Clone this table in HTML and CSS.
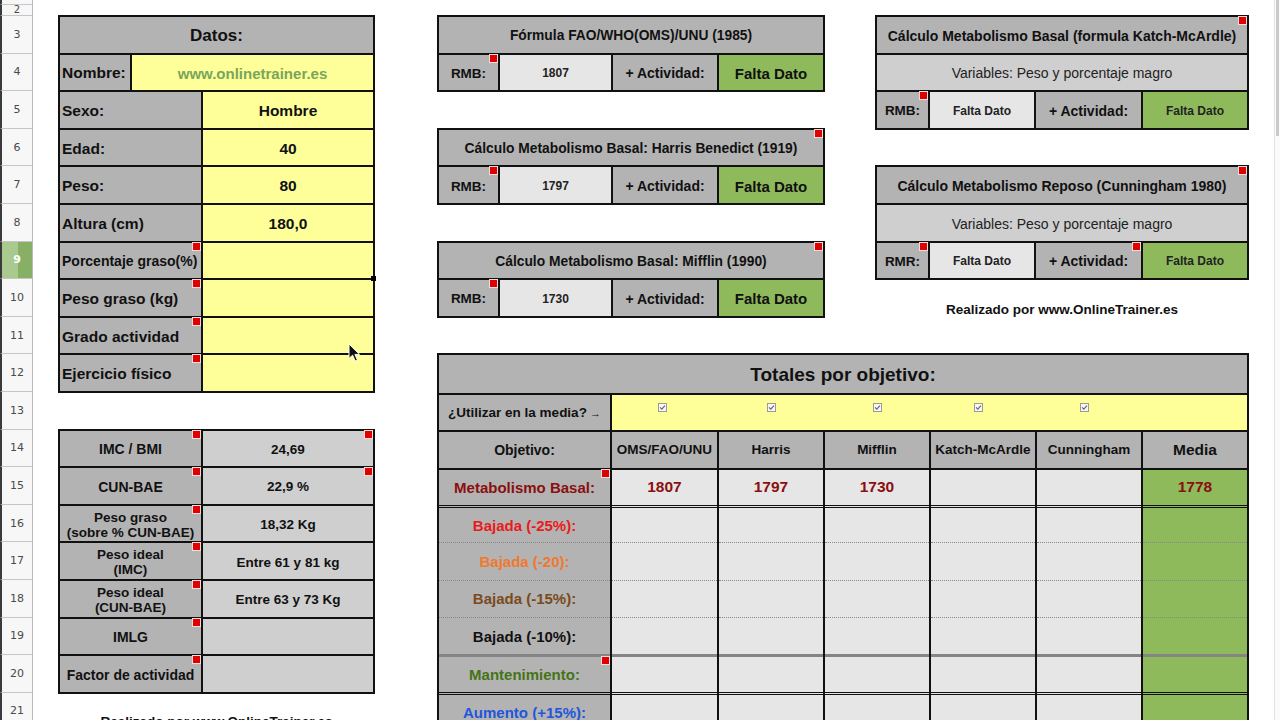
FILE: index.html
```html
<!DOCTYPE html>
<html lang="es">
<head>
<meta charset="utf-8">
<title>Cálculo metabolismo basal</title>
<link rel="stylesheet" href="styles.css">
</head>
<body>
<div class="sheet">
  <div class="rh rh-1"></div>
  <div class="rh rh-2">2</div>
  <div class="rh">3</div>
  <div class="rh">4</div>
  <div class="rh">5</div>
  <div class="rh">6</div>
  <div class="rh">7</div>
  <div class="rh">8</div>
  <div class="rh rh-sel">9</div>
  <div class="rh">10</div>
  <div class="rh">11</div>
  <div class="rh">12</div>
  <div class="rh">13</div>
  <div class="rh">14</div>
  <div class="rh">15</div>
  <div class="rh">16</div>
  <div class="rh">17</div>
  <div class="rh">18</div>
  <div class="rh">19</div>
  <div class="rh">20</div>
  <div class="rh">21</div>
  <div class="rh">22</div>

  <section class="blk datos">
    <div class="c hd full datos-title">Datos:</div>
    <div class="c lab left">Nombre:</div>
    <div class="c yel span2 site">www.onlinetrainer.es</div>
    <div class="c lab left span2">Sexo:</div>
    <div class="c yel">Hombre</div>
    <div class="c lab left span2">Edad:</div>
    <div class="c yel">40</div>
    <div class="c lab left span2">Peso:</div>
    <div class="c yel">80</div>
    <div class="c lab left span2">Altura (cm)</div>
    <div class="c yel">180,0</div>
    <div class="c lab left span2 small n">Porcentaje graso(%)</div>
    <div class="c yel sel"></div>
    <div class="c lab left span2 n">Peso graso (kg)</div>
    <div class="c yel"></div>
    <div class="c lab left span2 n">Grado actividad</div>
    <div class="c yel"></div>
    <div class="c lab left span2 n">Ejercicio físico</div>
    <div class="c yel"></div>
  </section>

  <section class="blk imc">
    <div class="c lab n">IMC / BMI</div>
    <div class="c mid n">24,69</div>
    <div class="c lab n">CUN-BAE</div>
    <div class="c mid n">22,9 %</div>
    <div class="c lab two n">Peso graso<br>(sobre % CUN-BAE)</div>
    <div class="c mid">18,32 Kg</div>
    <div class="c lab two n">Peso ideal<br>(IMC)</div>
    <div class="c mid">Entre 61 y 81 kg</div>
    <div class="c lab two n">Peso ideal<br>(CUN-BAE)</div>
    <div class="c mid">Entre 63 y 73 Kg</div>
    <div class="c lab n">IMLG</div>
    <div class="c mid"></div>
    <div class="c lab n">Factor de actividad</div>
    <div class="c mid"></div>
  </section>

  <div class="credit credit-left">Realizado por www.OnlineTrainer.es</div>

  <section class="blk formula fao">
    <div class="c hd full">Fórmula FAO/WHO(OMS)/UNU (1985)</div>
    <div class="c lab rmb n">RMB:</div>
    <div class="c light num">1807</div>
    <div class="c lab act">+ Actividad:</div>
    <div class="c grn falta">Falta Dato</div>
  </section>

  <section class="blk formula harris">
    <div class="c hd full n">Cálculo Metabolismo Basal: Harris Benedict (1919)</div>
    <div class="c lab rmb n">RMB:</div>
    <div class="c light num">1797</div>
    <div class="c lab act">+ Actividad:</div>
    <div class="c grn falta">Falta Dato</div>
  </section>

  <section class="blk formula mifflin">
    <div class="c hd full n">Cálculo Metabolismo Basal: Mifflin (1990)</div>
    <div class="c lab rmb n">RMB:</div>
    <div class="c light num">1730</div>
    <div class="c lab act">+ Actividad:</div>
    <div class="c grn falta">Falta Dato</div>
  </section>

  <section class="blk vars katch">
    <div class="c hd full n">Cálculo Metabolismo Basal (formula Katch-McArdle)</div>
    <div class="c mid full varline">Variables: Peso y porcentaje magro</div>
    <div class="c lab rmb n">RMB:</div>
    <div class="c light num">Falta Dato</div>
    <div class="c lab act">+ Actividad:</div>
    <div class="c grn num">Falta Dato</div>
  </section>

  <section class="blk vars cunning">
    <div class="c hd full n">Cálculo Metabolismo Reposo (Cunningham 1980)</div>
    <div class="c mid full varline">Variables: Peso y porcentaje magro</div>
    <div class="c lab rmb n">RMR:</div>
    <div class="c light num">Falta Dato</div>
    <div class="c lab act n">+ Actividad:</div>
    <div class="c grn num">Falta Dato</div>
  </section>

  <div class="credit credit-right">Realizado por www.OnlineTrainer.es</div>

  <section class="blk totales">
    <div class="c hd full title">Totales por objetivo:</div>

    <div class="tr solid">
      <div class="c lab q">¿Utilizar en la media? <span class="arrow">→</span></div>
      <div class="c yel checks">
        <span class="cb"><svg viewBox="0 0 8 8" width="7" height="7"><path d="M1.2 3.8 L3.2 5.8 L6.8 1.8" fill="none" stroke="#666" stroke-width="1.3"/></svg></span>
        <span class="cb"><svg viewBox="0 0 8 8" width="7" height="7"><path d="M1.2 3.8 L3.2 5.8 L6.8 1.8" fill="none" stroke="#666" stroke-width="1.3"/></svg></span>
        <span class="cb"><svg viewBox="0 0 8 8" width="7" height="7"><path d="M1.2 3.8 L3.2 5.8 L6.8 1.8" fill="none" stroke="#666" stroke-width="1.3"/></svg></span>
        <span class="cb"><svg viewBox="0 0 8 8" width="7" height="7"><path d="M1.2 3.8 L3.2 5.8 L6.8 1.8" fill="none" stroke="#666" stroke-width="1.3"/></svg></span>
        <span class="cb"><svg viewBox="0 0 8 8" width="7" height="7"><path d="M1.2 3.8 L3.2 5.8 L6.8 1.8" fill="none" stroke="#666" stroke-width="1.3"/></svg></span>
      </div>
    </div>

    <div class="tr solid">
      <div class="c lab obj">Objetivo:</div>
      <div class="c lab colh">OMS/FAO/UNU</div>
      <div class="c lab colh">Harris</div>
      <div class="c lab colh">Mifflin</div>
      <div class="c lab colh">Katch-McArdle</div>
      <div class="c lab colh">Cunningham</div>
      <div class="c lab media">Media</div>
    </div>

    <div class="tr solid">
      <div class="c lab rowl t-mb n">Metabolismo Basal:</div>
      <div class="c light big t-mb">1807</div>
      <div class="c light big t-mb">1797</div>
      <div class="c light big t-mb">1730</div>
      <div class="c light"></div>
      <div class="c light"></div>
      <div class="c grn big t-mb">1778</div>
    </div>

    <div class="tr dbl">
      <div class="c lab rowl t-25">Bajada (-25%):</div>
      <div class="c light"></div><div class="c light"></div><div class="c light"></div>
      <div class="c light"></div><div class="c light"></div><div class="c grn"></div>
    </div>

    <div class="tr dot">
      <div class="c lab rowl t-20">Bajada (-20):</div>
      <div class="c light"></div><div class="c light"></div><div class="c light"></div>
      <div class="c light"></div><div class="c light"></div><div class="c grn"></div>
    </div>

    <div class="tr dot">
      <div class="c lab rowl t-15">Bajada (-15%):</div>
      <div class="c light"></div><div class="c light"></div><div class="c light"></div>
      <div class="c light"></div><div class="c light"></div><div class="c grn"></div>
    </div>

    <div class="tr dot">
      <div class="c lab rowl t-10">Bajada (-10%):</div>
      <div class="c light"></div><div class="c light"></div><div class="c light"></div>
      <div class="c light"></div><div class="c light"></div><div class="c grn"></div>
    </div>

    <div class="tr grey">
      <div class="c lab rowl t-mant n">Mantenimiento:</div>
      <div class="c light"></div><div class="c light"></div><div class="c light"></div>
      <div class="c light"></div><div class="c light"></div><div class="c grn"></div>
    </div>

    <div class="tr dbl">
      <div class="c lab rowl t-up">Aumento (+15%):</div>
      <div class="c light"></div><div class="c light"></div><div class="c light"></div>
      <div class="c light"></div><div class="c light"></div><div class="c grn"></div>
    </div>
  </section>
</div>

<div class="vscroll"><div class="thumb"></div></div>

<svg class="cursor" width="13" height="20" viewBox="0 0 13 20"><path d="M1 1 L1 15.5 L4.6 12.2 L7.2 18 L9.4 17 L6.9 11.4 L11.6 11.4 Z" fill="#111" stroke="#fff" stroke-width="1" stroke-linejoin="round"/></svg>
</body>
</html>
```

FILE: styles.css
```css
* { box-sizing: border-box; }

html, body { margin: 0; padding: 0; }

body {
  width: 1280px;
  height: 720px;
  overflow: hidden;
  background: #fff;
  display: flex;
  position: relative;
  font-family: "Liberation Sans", Arial, sans-serif;
  color: #111;
}

.sheet {
  flex: 1;
  display: grid;
  grid-template-columns: 33px 26px 315px 64px 386px 52px 372px 1fr;
  grid-template-rows: 5px 11px repeat(20, 37.6px);
}

/* row headers */
.rh {
  grid-column: 1;
  border-left: 2px solid #3a3a3a;
  border-right: 1px solid #b9b9b9;
  border-bottom: 1px solid #c6c6c6;
  background: #f7f7f7;
  font-family: "DejaVu Sans", sans-serif;
  font-size: 11px;
  color: #4a4a4a;
  display: flex;
  align-items: center;
  justify-content: center;
  overflow: hidden;
}
.rh-2 { font-size: 10px; line-height: 10px; }
.rh-sel {
  background: linear-gradient(90deg, #a9c98f 0 52%, #87b066 52%);
  color: #fff;
  font-weight: bold;
}

/* blocks */
.blk {
  margin: -1px;
  background: #111;
  padding: 2px;
  display: grid;
  gap: 2px;
}

.c {
  display: flex;
  align-items: center;
  justify-content: center;
  text-align: center;
  font-weight: bold;
  position: relative;
  min-width: 0;
  white-space: nowrap;
  padding-top: 2px;
}
.full { grid-column: 1 / -1; }
.span2 { grid-column: span 2; }

.hd { background: #b3b3b3; font-size: 14px; }
.lab { background: #b3b3b3; }
.yel { background: #ffff99; }
.light { background: #e6e6e6; }
.mid { background: #cfcfcf; }
.grn { background: #8eba5b; }

/* comment markers */
.n::after {
  content: "";
  position: absolute;
  top: -1px;
  right: 0;
  width: 7px;
  height: 7px;
  background: #e00000;
  border: 1px solid #f6dede;
  z-index: 2;
}

.sel::before {
  content: "";
  position: absolute;
  right: -3px;
  bottom: -3px;
  width: 5px;
  height: 5px;
  background: #000;
  z-index: 3;
}

/* Datos */
.datos {
  grid-column: 3;
  grid-row: 3 / 13;
  grid-template-columns: 70px 69px 1fr;
  grid-template-rows: repeat(10, 1fr);
  font-size: 15.5px;
}
.datos-title { font-size: 17px; }
.left { justify-content: flex-start; padding-left: 2px; }
.small { font-size: 14px; }
.site { color: #78a65a; font-size: 15px; }

/* IMC */
.imc {
  grid-column: 3;
  grid-row: 14 / 21;
  grid-template-columns: 141px 1fr;
  grid-template-rows: repeat(7, 1fr);
}
.imc .lab { font-size: 14px; }
.imc .mid { font-size: 13.5px; }
.imc .two { font-size: 13.5px; line-height: 15px; }

.credit {
  display: flex;
  align-items: flex-end;
  justify-content: center;
  font-weight: bold;
  font-size: 13.5px;
  padding-bottom: 1px;
}
.credit-left { grid-column: 3; grid-row: 21; }
.credit-right { grid-column: 7; grid-row: 10; padding-bottom: 0; }

/* formula boxes */
.formula {
  grid-column: 5;
  grid-template-columns: 59px 111px 104px 1fr;
  grid-template-rows: 1fr 1fr;
}
.fao { grid-row: 3 / 5; }
.harris { grid-row: 6 / 8; }
.mifflin { grid-row: 9 / 11; }
.formula .hd { font-size: 13.8px; }

.rmb { font-size: 13.5px; }
.act { font-size: 14px; }
.num { font-size: 12px; color: #222; }
.falta { font-size: 15px; }

.vars {
  grid-column: 7;
  grid-template-columns: 51px 104px 105px 1fr;
  grid-template-rows: repeat(3, 1fr);
}
.katch { grid-row: 3 / 6; }
.cunning { grid-row: 7 / 10; }
.varline { font-weight: normal; font-size: 14px; color: #222; }

/* Totales */
.totales {
  grid-column: 5 / 8;
  grid-row: 12 / 22;
  grid-template-columns: 171px 105px 104px 104px 104px 104px 1fr;
  grid-template-rows: repeat(10, 1fr);
  column-gap: 2px;
  row-gap: 0;
}
.title { font-size: 19px; }
.tr { display: contents; }
.tr > .c { padding-top: 0; }
.solid > .c { border-top: 2px solid #111; }
.dbl > .c { border-top: 3px double #111; }
.dot > .c { border-top: 1px dotted #8a8a8a; }
.grey > .c { border-top: 3px solid #858585; }

.q { font-size: 13.5px; }
.arrow { font-size: 11px; margin-left: 3px; position: relative; top: 1px; }
.tr > .checks {
  grid-column: span 6;
  display: grid;
  grid-template-columns: 100px 118px 94px 108px 104px 1fr;
  column-gap: 0;
  justify-items: center;
  align-items: start;
  padding-top: 8px;
}
.cb {
  width: 9px;
  height: 9px;
  border: 1px solid #9a9a9a;
  background: #f7f7f7;
  display: flex;
  align-items: center;
  justify-content: center;
}
.cb svg { display: block; }

.obj { font-size: 14px; }
.colh { font-size: 13.5px; }
.media { font-size: 15.5px; }
.rowl { font-size: 15px; }
.big { font-size: 15.5px; }

.t-mb { color: #8a0f0f; }
.t-25 { color: #ea1a1a; }
.t-20 { color: #f2782e; }
.t-15 { color: #7a4a1d; }
.t-10 { color: #111; }
.t-mant { color: #457317; }
.t-up { color: #2256dc; }

/* scrollbar */
.vscroll {
  width: 6px;
  border-left: 1px solid #e2e2e2;
  background: #fbfbfb;
}
.thumb {
  margin-left: 1px;
  width: 3px;
  height: 136px;
  background: #cacaca;
}

.cursor {
  position: absolute;
  left: 348px;
  top: 343px;
}
```
